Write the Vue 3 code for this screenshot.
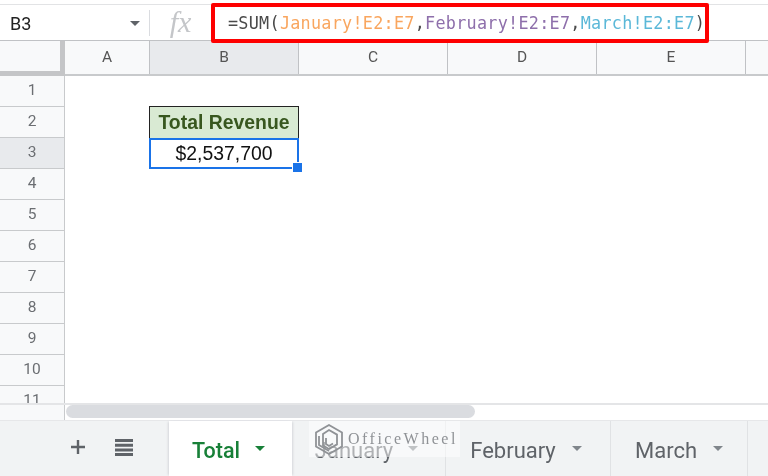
<script setup>
const columns = [
  { name: 'A', width: 85 },
  { name: 'B', width: 149, active: true },
  { name: 'C', width: 149 },
  { name: 'D', width: 149 },
  { name: 'E', width: 149 },
]
const rows = [1, 2, 3, 4, 5, 6, 7, 8, 9, 10, 11]
const tabs = ['January', 'February', 'March']
</script>

<template>
  <div class="sheet">
    <div class="formula-bar">
      <div class="name-box">
        <span class="cell-ref">B3</span>
        <span class="caret dark"></span>
      </div>
      <div class="fx">fx</div>
      <div class="formula">
        <span class="plain">=SUM(</span><span class="orange">January!E2:E7</span><span class="plain">,</span><span class="purple">February!E2:E7</span><span class="plain">,</span><span class="blue">March!E2:E7</span><span class="plain">)</span>
      </div>
    </div>

    <div class="col-header">
      <div class="corner"></div>
      <div
        v-for="c in columns"
        :key="c.name"
        class="col"
        :class="{ active: c.active }"
        :style="{ width: c.width + 'px' }"
      >{{ c.name }}</div>
    </div>

    <div class="grid-area">
      <div class="row-header">
        <div v-for="r in rows" :key="r" class="row-num" :class="{ active: r === 3 }">{{ r }}</div>
      </div>
      <div class="cells">
        <div class="table">
          <div class="title-cell">Total Revenue</div>
          <div class="value-cell">
            $2,537,700
            <span class="handle"></span>
          </div>
        </div>
      </div>
    </div>

    <div class="scroll-row">
      <div class="scroll-corner"></div>
      <div class="scroll-track"><div class="thumb"></div></div>
    </div>

    <div class="tabbar">
      <div class="tools">
        <svg class="plus" width="16" height="16" viewBox="0 0 16 16"><path d="M6.800 1h2.400v5.800H15v2.400H9.200V15H6.800V9.200H1V6.800h5.800z" fill="#5f6368"/></svg>
        <svg class="list" width="18" height="17" viewBox="0 0 18 17"><path d="M0 0h18v3H0zM0 4.700h18v3H0zM0 9.400h18v3H0zM0 14h18v3H0z" fill="#5f6368"/></svg>
      </div>
      <div class="tab current">
        <span>Total</span>
        <span class="caret green"></span>
      </div>
      <div v-for="t in tabs" :key="t" class="tab" :class="t.toLowerCase()">
        <span>{{ t }}</span>
        <span class="caret"></span>
      </div>
      <div class="watermark">
        <svg width="28" height="31" viewBox="0 0 28 31" fill="none" stroke="#8f9296" stroke-width="1.800">
          <path d="M14 1 27 8.500v14L14 30 1 22.500v-14z"/>
          <path d="M14 6l8 4.600v9.800L14 25l-6-3.500V10z"/>
          <path d="M4 12v9l10 6"/>
          <path d="M11 14v6l3 2 4-2.500"/>
        </svg>
        <span class="wm-text">OfficeWheel</span>
      </div>
    </div>
  </div>
</template>

<style>
html, body { margin: 0; background: #fff; }
</style>

<style scoped>
.sheet {
  width: 768px;
  height: 476px;
  display: flex;
  flex-direction: column;
  overflow: hidden;
  position: relative;
  font-family: Roboto, "Liberation Sans", Arial, sans-serif;
  background: #fff;
  color: #222;
  filter: blur(0.4px);
}
.formula-bar {
  height: 35px;
  margin-top: 5px;
  box-shadow: 0 -1px 0 #e2e3e5;
  display: flex;
  align-items: flex-start;
  flex: none;
  box-sizing: border-box;
}
.name-box {
  width: 150px;
  height: 26px;
  margin-top: 5px;
  flex: none;
  display: flex;
  align-items: center;
  justify-content: space-between;
  padding: 0 9px 0 10px;
  box-sizing: border-box;
  border-right: 1px solid #dadce0;
}
.cell-ref { font-size: 18px; color: #222; }
.caret {
  width: 0;
  height: 0;
  border-left: 5.500px solid transparent;
  border-right: 5.500px solid transparent;
  border-top: 5.500px solid #80868b;
  display: inline-block;
}
.caret.dark { border-top-color: #5f6368; }
.caret.green { border-top-color: #188038; }
.fx {
  width: 61px;
  flex: none;
  height: 35px;
  text-align: center;
  font-family: "Liberation Serif", serif;
  font-style: italic;
  font-size: 30px;
  color: #c4c6c9;
  line-height: 34px;
}
.formula {
  box-sizing: border-box;
  height: 40px;
  width: 498px;
  flex: none;
  margin-top: -2px;
  margin-bottom: -3px;
  border: 4px solid #fe0000;
  border-radius: 2px;
  padding-left: 13px;
  display: flex;
  align-items: center;
  white-space: pre;
  font-family: "DejaVu Sans Mono", monospace;
  font-size: 16.800px;
  letter-spacing: 0.270px;
  position: relative;
  z-index: 2;
  background: #fff;
}
.plain { color: #4a4a4a; }
.orange { color: #f9a65f; }
.purple { color: #8e6fab; }
.blue { color: #5bb8d8; }
.col-header {
  height: 36px;
  flex: none;
  display: flex;
  background: #f8f9fa;
  border-top: 1px solid #c0c2c5;
  border-bottom: 2px solid #c8cacc;
  box-sizing: border-box;
}
.corner {
  width: 65px;
  flex: none;
  box-sizing: border-box;
  border-right: 5px solid #c4c5c7;
  border-bottom: 5px solid #c4c5c7;
  margin-bottom: -2px;
  background: #f8f9fa;
}
.col {
  flex: none;
  box-sizing: border-box;
  border-right: 1px solid #c0c2c5;
  display: flex;
  align-items: center;
  justify-content: center;
  padding-bottom: 1px;
  color: #555;
  font-size: 15.500px;
}
.col.active { background: #e8eaed; }
.grid-area {
  flex: 1;
  min-height: 0;
  display: flex;
  overflow: hidden;
}
.row-header {
  width: 65px;
  flex: none;
  background: #f8f9fa;
  border-right: 1px solid #c8cacc;
  box-sizing: border-box;
}
.row-num {
  height: 31px;
  box-sizing: border-box;
  border-bottom: 1px solid #c8cacc;
  display: flex;
  align-items: center;
  justify-content: center;
  padding-bottom: 2px;
  color: #6b6e72;
  font-size: 15.500px;
}
.row-num.active { background: #e8eaed; }
.cells { flex: 1; padding: 30px 0 0 84px; }
.table { width: 150px; }
.title-cell {
  box-sizing: border-box;
  height: 32px;
  background: #d9ead3;
  border: 1px solid #222;
  border-bottom: 0;
  display: flex;
  align-items: center;
  justify-content: center;
  font-family: "Liberation Sans", Arial, sans-serif;
  font-weight: 700;
  font-size: 19.400px;
  color: #38571f;
}
.value-cell {
  box-sizing: border-box;
  height: 31px;
  border: 2.500px solid #1a73e8;
  display: flex;
  align-items: center;
  justify-content: center;
  font-family: "Liberation Sans", Arial, sans-serif;
  font-size: 19.400px;
  color: #111;
  position: relative;
}
.handle {
  position: absolute;
  right: -5.500px;
  bottom: -5.500px;
  width: 9px;
  height: 9px;
  background: #1a73e8;
  border: 1px solid #fff;
}
.scroll-row {
  height: 17px;
  flex: none;
  display: flex;
  border-top: 2px solid #e4e5e7;
  box-sizing: border-box;
}
.scroll-corner {
  width: 65px;
  flex: none;
  background: #f8f9fa;
  border-right: 1px solid #c8cacc;
  box-sizing: border-box;
}
.scroll-track { flex: 1; padding: 0 0 0 1px; }
.thumb {
  width: 409px;
  height: 13px;
  border-radius: 7px;
  background: #dadce0;
}
.tabbar {
  height: 56px;
  flex: none;
  display: flex;
  background: #f1f3f4;
  border-top: 1px solid #e6e7e9;
  box-sizing: border-box;
  position: relative;
}
.tools {
  width: 169px;
  flex: none;
  display: flex;
  align-items: flex-start;
  padding: 18px 0 0 70px;
  gap: 29px;
  box-sizing: border-box;
}
.tab {
  display: flex;
  align-items: center;
  justify-content: center;
  gap: 15px;
  box-sizing: border-box;
  border-right: 1px solid #e0e2e4;
  padding: 3px 4px 0 0;
  font-size: 22px;
  color: #5f6368;
}
.tab .caret { margin-top: -3px; }
.tab.current {
  width: 123px;
  background: #fff;
  color: #188038;
  font-size: 21.500px;
  font-weight: 500;
  box-shadow: -2px 0 2px -1px #d5d7da, 2px 0 2px -1px #d5d7da;
  border-right: 0;
  z-index: 1;
}
.tab.january { width: 154px; }
.tab.february { width: 165px; gap: 16px; }
.tab.march { width: 137px; gap: 16px; padding-right: 0; }
.watermark {
  position: absolute;
  left: 309px;
  top: 0;
  width: 151px;
  height: 36px;
  background: rgba(255, 255, 255, 0.5);
  display: flex;
  align-items: center;
  gap: 5px;
  padding-left: 6px;
  box-sizing: border-box;
  z-index: 2;
}
.wm-text {
  font-family: "Liberation Serif", serif;
  font-size: 16px;
  letter-spacing: 2.500px;
  color: #8f9296;
  margin-top: -1px;
  white-space: nowrap;
}
</style>
